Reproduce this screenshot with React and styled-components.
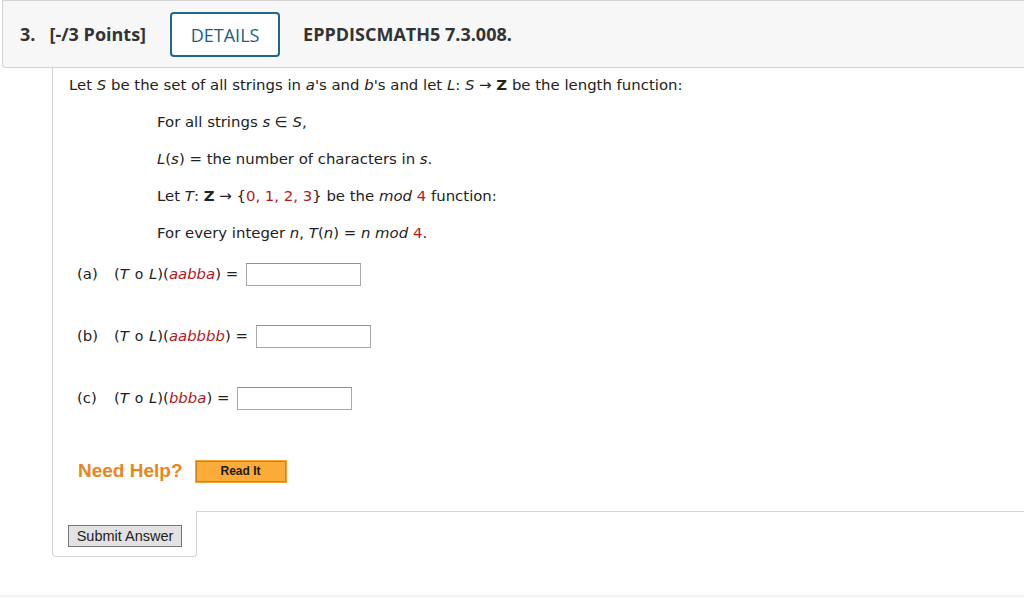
import React from "react";
import styled, { createGlobalStyle } from "styled-components";

const Global = createGlobalStyle`
  html, body { margin: 0; padding: 0; background: #fff; }
  body { font-family: "DejaVu Sans", Verdana, sans-serif; color: #222; }
`;

const Page = styled.div`
  width: 1024px;
  height: 598px;
  overflow: hidden;
  display: flex;
  flex-direction: column;
`;

const Header = styled.div`
  margin-left: 2px;
  height: 66px;
  background: #f7f7f7;
  border-top: 1px solid #d4d4d4;
  border-left: 1px solid #d4d4d4;
  border-bottom: 1px solid #d4d4d4;
  border-bottom-left-radius: 4px;
  display: flex;
  align-items: center;
  padding-left: 17px;
  font-family: "Open Sans", sans-serif;
  font-weight: 700;
  font-size: 18px;
  color: #333;
`;

const Num = styled.span`
  margin-right: 14px;
`;

const Points = styled.span`
  margin-right: 24px;
`;

const DetailsButton = styled.button`
  width: 110px;
  height: 45px;
  margin-top: 1px;
  border: 2px solid #1c6a8a;
  border-radius: 4px;
  background: #fff;
  color: #1a5f80;
  font-family: "Open Sans", sans-serif;
  font-size: 18px;
  font-weight: 400;
  margin-right: 23px;
  padding: 0;
`;

const Code = styled.span`
  font-size: 18px;
`;

const Question = styled.div`
  margin-left: 52px;
  display: flex;
  flex-direction: column;
`;

const Content = styled.div`
  border-left: 1px solid #d4d4d4;
  padding: 6px 0 29px 16px;
  font-size: 14.9px;
  display: flex;
  flex-direction: column;
`;

const Line = styled.div`
  height: 22px;
  line-height: 22px;
  margin-bottom: 15px;
  padding-left: ${(p) => (p.indent ? "88px" : "0")};
  white-space: nowrap;
`;

const Parts = styled.div`
  margin-top: 3px;
  padding-left: 8px;
  display: flex;
  flex-direction: column;
  gap: 38px;
`;

const Part = styled.div`
  height: 24px;
  display: flex;
  align-items: center;
`;

const Label = styled.span`
  width: 37px;
`;

const Expr = styled.span`
  white-space: nowrap;
`;

const Red = styled.span`
  color: #b3191e;
  font-style: ${(p) => (p.i ? "italic" : "normal")};
`;

const I = styled.i``;
const B = styled.b``;

const Compose = styled.span`
  font-size: 14px;
  margin: 0 1px;
`;

const Answer = styled.input`
  width: 115px;
  height: 23px;
  box-sizing: border-box;
  margin-left: 8px;
  border: 1px solid #a8a8a8;
  border-top-color: #8f8f8f;
  background: #fff;
  padding: 0;
`;

const Help = styled.div`
  margin-top: 50px;
  padding-left: 9px;
  display: flex;
  align-items: center;
  height: 22px;
`;

const NeedHelp = styled.span`
  font-family: "Liberation Sans", Arial, sans-serif;
  font-weight: 700;
  font-size: 19px;
  color: #e8861c;
  margin-right: 12px;
`;

const ReadIt = styled.button`
  width: 92px;
  height: 23px;
  box-sizing: border-box;
  background: #fbab37;
  border: 1px solid #f5a23a;
  box-shadow: inset 0 0 0 1px #c98222;
  font-family: "Liberation Sans", Arial, sans-serif;
  font-weight: 700;
  font-size: 12px;
  color: #1a1a1a;
  padding: 0;
`;

const Footer = styled.div`
  display: flex;
`;

const SubmitTab = styled.div`
  width: 145px;
  border-left: 1px solid #d4d4d4;
  border-right: 1px solid #d4d4d4;
  border-bottom: 1px solid #d4d4d4;
  border-bottom-left-radius: 4px;
  border-bottom-right-radius: 4px;
  padding: 14px 0 9px 15px;
  box-sizing: border-box;
`;

const Filler = styled.div`
  flex: 1;
  border-top: 1px solid #d4d4d4;
`;

const Submit = styled.button`
  height: 22px;
  width: 114px;
  box-sizing: border-box;
  background: #e2e2e2;
  border: 1px solid #777;
  font-family: "Liberation Sans", Arial, sans-serif;
  font-size: 14.5px;
  color: #222;
  padding: 0;
`;

const NextBar = styled.div`
  margin-top: auto;
  height: 2px;
  background: #f5f5f5;
  border-top: 1px solid #f0f0f0;
`;

function PartRow({ label, word }) {
  return (
    <Part>
      <Label>{label}</Label>
      <Expr>
        (<I>T</I> <Compose>o</Compose> <I>L</I>)(<Red i>{word}</Red>) =
      </Expr>
      <Answer />
    </Part>
  );
}

export default function App() {
  return (
    <Page>
      <Global />
      <Header>
        <Num>3.</Num>
        <Points>[-/3 Points]</Points>
        <DetailsButton>DETAILS</DetailsButton>
        <Code>EPPDISCMATH5 7.3.008.</Code>
      </Header>
      <Question>
        <Content>
          <Line>
            Let <I>S</I> be the set of all strings in <I>a</I>'s and <I>b</I>'s and let <I>L</I>: <I>S</I> → <B>Z</B> be the length function:
          </Line>
          <Line indent>
            For all strings <I>s</I> ∈ <I>S</I>,
          </Line>
          <Line indent>
            <I>L</I>(<I>s</I>) = the number of characters in <I>s</I>.
          </Line>
          <Line indent>
            Let <I>T</I>: <B>Z</B> → {"{"}<Red>0, 1, 2, 3</Red>{"}"} be the <I>mod</I> <Red>4</Red> function:
          </Line>
          <Line indent>
            For every integer <I>n</I>, <I>T</I>(<I>n</I>) = <I>n</I> <I>mod</I> <Red>4</Red>.
          </Line>
          <Parts>
            <PartRow label="(a)" word="aabba" />
            <PartRow label="(b)" word="aabbbb" />
            <PartRow label="(c)" word="bbba" />
          </Parts>
          <Help>
            <NeedHelp>Need Help?</NeedHelp>
            <ReadIt>Read It</ReadIt>
          </Help>
        </Content>
        <Footer>
          <SubmitTab>
            <Submit>Submit Answer</Submit>
          </SubmitTab>
          <Filler />
        </Footer>
      </Question>
      <NextBar />
    </Page>
  );
}
